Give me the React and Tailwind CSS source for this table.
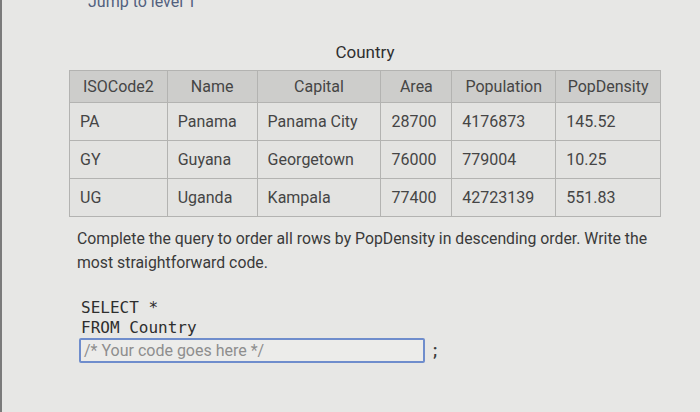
const columns = [
  { label: "ISOCode2", width: "w-[98px]" },
  { label: "Name", width: "w-[90px]" },
  { label: "Capital", width: "w-[124px]" },
  { label: "Area", width: "w-[71px]" },
  { label: "Population", width: "w-[104px]" },
  { label: "PopDensity", width: "w-[105px]" },
];

const rows = [
  ["PA", "Panama", "Panama City", "28700", "4176873", "145.52"],
  ["GY", "Guyana", "Georgetown", "76000", "779004", "10.25"],
  ["UG", "Uganda", "Kampala", "77400", "42723139", "551.83"],
];

export default function App() {
  return (
    <div
      className="w-[700px] h-[412px] overflow-hidden bg-[#e7e7e5] border-l-2 border-[#7b7b7b] flex flex-col"
      style={{ fontFamily: "Roboto, 'Liberation Sans', sans-serif" }}
    >
      {/* cut-off link at the top */}
      <div className="mt-[-8px] ml-[86px] text-[16px] leading-[20px] text-[#52607e]">
        Jump to level 1
      </div>

      <div className="mt-[28px] ml-[67px] w-[592px] flex flex-col">
        <div className="text-center text-[17px] leading-[24px] text-[#2f2f2f] mb-[6px]">
          Country
        </div>

        <table className="border-collapse border border-[#a5a5a5] text-[16px] text-[#454545]">
          <thead>
            <tr className="h-[32px] bg-[#cdcdcb]">
              {columns.map((c) => (
                <th
                  key={c.label}
                  className={`${c.width} border border-[#b3b3b1] font-normal text-center p-0`}
                >
                  {c.label}
                </th>
              ))}
            </tr>
          </thead>
          <tbody>
            {rows.map((r) => (
              <tr key={r[0]} className="h-[38px] bg-[#e3e3e1]">
                {r.map((v, i) => (
                  <td
                    key={i}
                    className="border border-[#b3b3b1] text-left px-[10px] py-0"
                  >
                    {v}
                  </td>
                ))}
              </tr>
            ))}
          </tbody>
        </table>
      </div>

      <p className="mt-[10px] ml-[75px] w-[600px] text-[15.8px] leading-[24px] text-[#3a3a3a]">
        Complete the query to order all rows by PopDensity in descending order. Write the most
        straightforward code.
      </p>

      <div
        className="mt-[23px] ml-[79px] text-[16px] leading-[20px] text-[#2e2e2e]"
        style={{ fontFamily: "'DejaVu Sans Mono', 'Liberation Mono', monospace" }}
      >
        <div>SELECT *</div>
        <div>FROM Country</div>
      </div>

      <div className="ml-[77px] flex items-center gap-[8px]">
        <div className="w-[346px] h-[25px] border-2 border-[#6f8dcc] rounded-[2px] bg-[#ececea] flex items-center px-[3px] text-[16px] text-[#8e8e8e]">
          /* Your code goes here */
        </div>
        <span className="text-[16px] text-[#3a3a3a] font-bold">;</span>
      </div>
    </div>
  );
}
